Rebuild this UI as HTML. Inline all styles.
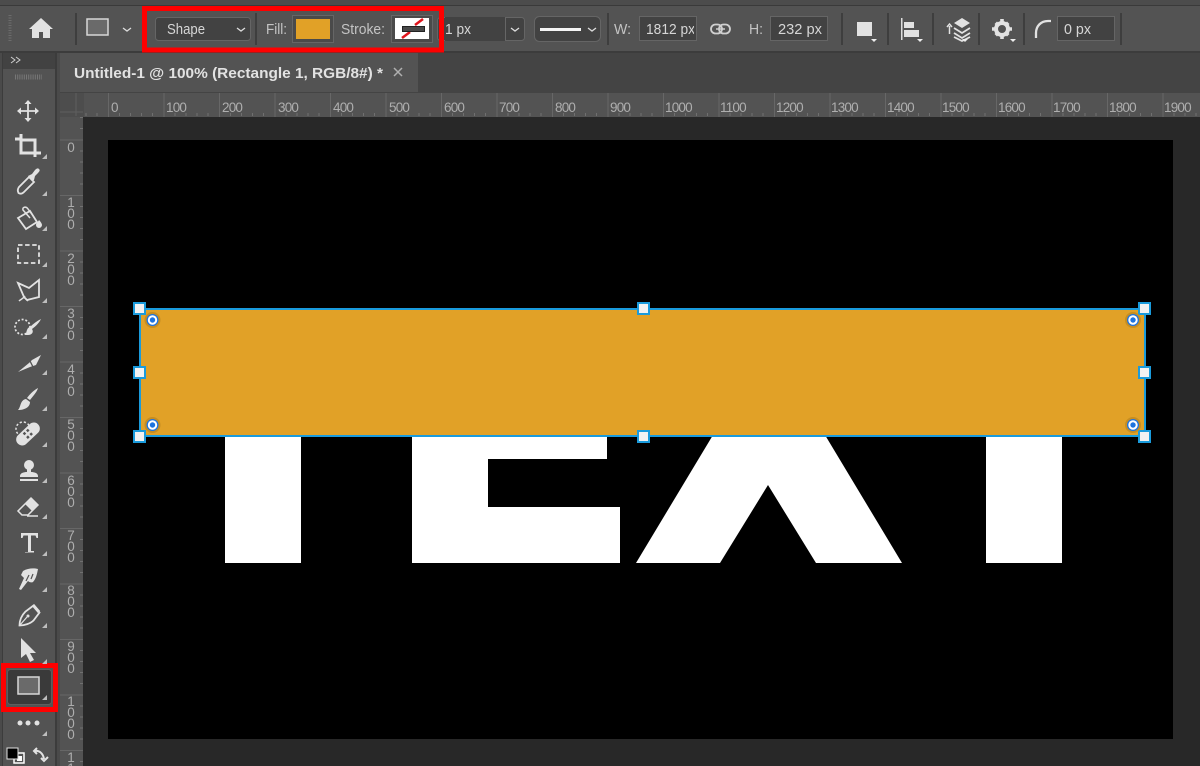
<!DOCTYPE html>
<html><head><meta charset="utf-8"><style>
html,body{margin:0;padding:0;background:#282828;width:1200px;height:766px;overflow:hidden}
svg{display:block}
text{font-family:"Liberation Sans",sans-serif}
.o{font-size:15px;fill:#d6d6d6}
.l{font-size:15px;fill:#c4c4c4}
.r{font-size:13.5px;fill:#aeaeae;letter-spacing:-.8px}
.v{font-size:13.5px;fill:#aeaeae;text-anchor:middle}
.s{fill:none;stroke:#e2e2e2;stroke-width:2}
.f{fill:#e2e2e2}
.d{fill:#424242;stroke:#656565;stroke-width:1}
.n{stroke:#3e3e3e;stroke-width:2}
</style></head><body>
<svg width="1200" height="766" viewBox="0 0 1200 766" xmlns="http://www.w3.org/2000/svg">
<defs>
<pattern id="hm" x="108" y="0" width="55.5" height="766" patternUnits="userSpaceOnUse"><rect width="1" height="766" fill="#676767"/><rect x="11" y="113" width="1" height="3" fill="#707070"/><rect x="22" y="113" width="1" height="3" fill="#707070"/><rect x="33" y="113" width="1" height="3" fill="#707070"/><rect x="44" y="113" width="1" height="3" fill="#707070"/></pattern>
<pattern id="vm" x="0" y="139.5" width="766" height="55.5" patternUnits="userSpaceOnUse"><rect width="766" height="1" fill="#676767"/><rect x="80" y="11" width="3" height="1" fill="#707070"/><rect x="80" y="22" width="3" height="1" fill="#707070"/><rect x="80" y="33" width="3" height="1" fill="#707070"/><rect x="80" y="44" width="3" height="1" fill="#707070"/></pattern>
</defs>

<!-- base -->
<rect width="1200" height="766" fill="#282828"/>
<rect width="1200" height="5" fill="#4c4c4c"/>
<rect y="5" width="1200" height="1" fill="#3a3a3a"/>
<rect y="6" width="1200" height="46" fill="#535353"/>
<rect y="51" width="1200" height="2" fill="#3c3c3c"/>
<rect y="53" width="1200" height="40" fill="#444"/>

<!-- left panel -->
<rect y="53" width="60" height="713" fill="#4a4a4a"/>
<rect x="2" y="53" width="1" height="713" fill="#3c3c3c"/>
<rect x="3" y="53" width="53" height="16" fill="#424242"/>
<rect x="3" y="69" width="53" height="697" fill="#535353"/>
<rect x="55" y="53" width="2" height="713" fill="#3c3c3c"/>
<path d="M11 57l4 3-4 3M16 57l4 3-4 3" fill="none" stroke="#cfcfcf" stroke-width="1"/>
<path d="M15 77h27" stroke="#777" stroke-width="5" stroke-dasharray="1 1.2"/>

<!-- tab -->
<rect x="60" y="53" width="358" height="39" fill="#535353"/>
<text x="74" y="78" font-size="15" font-weight="700" fill="#e2e2e2" textLength="309" lengthAdjust="spacingAndGlyphs">Untitled-1 @ 100% (Rectangle 1, RGB/8#) *</text>
<path d="M394 68l8 8M402 68l-8 8" stroke="#b0b0b0" stroke-width="1.500"/>

<!-- rulers -->
<rect x="60" y="93" width="1140" height="24" fill="#535353"/>
<rect x="60" y="93" width="24" height="673" fill="#535353"/>
<rect x="60" y="93" width="24" height="24" fill="#4d4d4d"/>
<rect x="84" y="93" width="1116" height="24" fill="url(#hm)"/>
<rect x="60" y="117" width="24" height="649" fill="url(#vm)"/>
<path d="M60 112h23M76 93v23" stroke="#5e5e5e" stroke-width="1"/>
<rect x="83" y="117" width="1117" height="649" fill="#282828"/>
<g class="r">
<text x="111" y="112">0</text><text x="166" y="112">100</text><text x="222" y="112">200</text><text x="278" y="112">300</text><text x="333" y="112">400</text><text x="389" y="112">500</text><text x="444" y="112">600</text><text x="499" y="112">700</text><text x="555" y="112">800</text><text x="610" y="112">900</text><text x="665" y="112">1000</text><text x="720" y="112">1100</text><text x="776" y="112">1200</text><text x="831" y="112">1300</text><text x="887" y="112">1400</text><text x="942" y="112">1500</text><text x="998" y="112">1600</text><text x="1053" y="112">1700</text><text x="1109" y="112">1800</text><text x="1164" y="112">1900</text>
</g>
<g class="v" transform="translate(0 1)">
<text x="71" y="151">0</text>
<text x="71" y="206">1</text><text x="71" y="217">0</text><text x="71" y="228">0</text>
<text x="71" y="262">2</text><text x="71" y="273">0</text><text x="71" y="284">0</text>
<text x="71" y="317">3</text><text x="71" y="328">0</text><text x="71" y="339">0</text>
<text x="71" y="373">4</text><text x="71" y="384">0</text><text x="71" y="395">0</text>
<text x="71" y="428">5</text><text x="71" y="439">0</text><text x="71" y="450">0</text>
<text x="71" y="484">6</text><text x="71" y="495">0</text><text x="71" y="506">0</text>
<text x="71" y="539">7</text><text x="71" y="550">0</text><text x="71" y="561">0</text>
<text x="71" y="594">8</text><text x="71" y="605">0</text><text x="71" y="616">0</text>
<text x="71" y="650">9</text><text x="71" y="661">0</text><text x="71" y="672">0</text>
<text x="71" y="705">1</text><text x="71" y="716">0</text><text x="71" y="727">0</text><text x="71" y="738">0</text>
<text x="71" y="761">1</text><text x="71" y="772">1</text>
</g>

<!-- document -->
<rect x="108" y="140" width="1065" height="599" fill="#000"/>
<g fill="#fff">
<rect x="225" y="430" width="76" height="133"/>
<path d="M412 430H607V459H488V507H620V563H412Z"/>
<path d="M716 430H822L902 563H816L768 485L720 563H636Z"/>
<rect x="986" y="430" width="76" height="133"/>
</g>
<rect x="140" y="309" width="1005" height="127" fill="#e1a127" stroke="#1a9bdc" stroke-width="2"/>
<g fill="#f2f2f2" stroke="#1a9bdc" stroke-width="2">
<rect x="134" y="303" width="11" height="11"/><rect x="638" y="303" width="11" height="11"/><rect x="1139" y="303" width="11" height="11"/>
<rect x="134" y="367" width="11" height="11"/><rect x="1139" y="367" width="11" height="11"/>
<rect x="134" y="431" width="11" height="11"/><rect x="638" y="431" width="11" height="11"/><rect x="1139" y="431" width="11" height="11"/>
</g>
<g>
<g fill="#c58d22"><circle cx="152.500" cy="320" r="8"/><circle cx="1133" cy="320" r="8"/><circle cx="152.500" cy="425" r="8"/><circle cx="1133" cy="425" r="8"/></g>
<g fill="#1d74e0"><circle cx="152.500" cy="320" r="6"/><circle cx="1133" cy="320" r="6"/><circle cx="152.500" cy="425" r="6"/><circle cx="1133" cy="425" r="6"/></g>
<g fill="#fff"><circle cx="152.500" cy="320" r="4.700"/><circle cx="1133" cy="320" r="4.700"/><circle cx="152.500" cy="425" r="4.700"/><circle cx="1133" cy="425" r="4.700"/></g>
<g fill="#1d74e0"><circle cx="152.500" cy="320" r="2.700"/><circle cx="1133" cy="320" r="2.700"/><circle cx="152.500" cy="425" r="2.700"/><circle cx="1133" cy="425" r="2.700"/></g>
</g>

<!-- options bar -->
<path d="M10 15v27" stroke="#6c6c6c" stroke-width="3" stroke-dasharray="1 1.500"/>
<path class="f" d="M41 18L29 29h3v9h7v-6h4v6h7v-9h3z"/>
<path class="n" d="M76 13v32"/>
<rect x="87" y="19" width="21" height="16" fill="#6a6a6a" stroke="#d8d8d8" stroke-width="1.500"/>
<path d="M123 28l4 3 4-3" fill="none" stroke="#ddd" stroke-width="1.300"/>

<rect x="155.500" y="17.500" width="95" height="23" rx="3" class="d"/>
<text x="167" y="34" class="o" textLength="38" lengthAdjust="spacingAndGlyphs">Shape</text>
<path d="M237 28l4 3 4-3" fill="none" stroke="#ddd" stroke-width="1.300"/>
<path class="n" d="M256 13v32"/>
<text x="266" y="34" class="l" textLength="21" lengthAdjust="spacingAndGlyphs">Fill:</text>
<rect x="292.500" y="15.500" width="41" height="27" fill="#4a4a4a" stroke="#666"/>
<rect x="296" y="19" width="34" height="20" fill="#e1a127"/>
<text x="341" y="34" class="l" textLength="44" lengthAdjust="spacingAndGlyphs">Stroke:</text>
<rect x="391.500" y="15.500" width="41" height="27" fill="#4a4a4a" stroke="#666"/>
<rect x="395" y="18" width="34" height="21" fill="#fff"/>
<path d="M402 38l8-6M415 25l8-6" stroke="#e0141c" stroke-width="2.500"/>
<rect x="402.500" y="26.500" width="22" height="5" fill="#484848" stroke="#222" stroke-width="1"/>

<rect x="437.500" y="17.500" width="87" height="23" rx="3" class="d"/>
<rect x="445" y="17" width="60" height="24" fill="#424242"/>
<rect x="505" y="18" width="1" height="22" fill="#666"/>
<text x="445" y="34" class="o" textLength="26" lengthAdjust="spacingAndGlyphs">1 px</text>
<path d="M511 28l4 3 4-3" fill="none" stroke="#ddd" stroke-width="1.300"/>

<!-- red highlight -->
<rect x="144.500" y="8.500" width="297" height="41.500" fill="none" stroke="#fe0000" stroke-width="5"/>

<rect x="534.500" y="16.500" width="66" height="25" rx="5" class="d"/>
<rect x="540" y="28" width="41" height="3" fill="#f4f4f4"/>
<path d="M588 28l4 3 4-3" fill="none" stroke="#ddd" stroke-width="1.300"/>
<path class="n" d="M608 13v32"/>

<text x="614" y="34" class="l" textLength="17" lengthAdjust="spacingAndGlyphs">W:</text>
<rect x="639.500" y="16.500" width="57" height="24" class="d"/>
<text x="646" y="34" class="o" textLength="49" lengthAdjust="spacingAndGlyphs">1812 px</text>
<rect x="694" y="18" width="2" height="21" fill="#424242"/>
<g fill="none" stroke="#d0d0d0" stroke-width="1.800"><rect x="711" y="24.500" width="11" height="9" rx="4.500"/><rect x="719" y="24.500" width="11" height="9" rx="4.500"/></g>
<path d="M716 29h9" stroke="#d0d0d0" stroke-width="1.500"/>
<text x="749" y="34" class="l" textLength="14" lengthAdjust="spacingAndGlyphs">H:</text>
<rect x="770.500" y="16.500" width="57" height="24" class="d"/>
<text x="778" y="34" class="o" textLength="44" lengthAdjust="spacingAndGlyphs">232 px</text>
<path class="n" d="M842 13v32"/>

<rect x="857" y="22" width="15" height="14" fill="#e2e2e2"/>
<path d="M871 39h6l-3 3z" fill="#eee"/>
<path class="n" d="M888 13v32"/>

<rect x="901" y="18" width="1.500" height="22" fill="#ddd"/>
<rect x="904" y="22" width="10" height="6" fill="#e2e2e2"/>
<rect x="904" y="30" width="15" height="7" fill="#e2e2e2"/>
<path d="M917 39h6l-3 3z" fill="#eee"/>
<path class="n" d="M933 13v32"/>

<path d="M947 27l2.500-3 2.500 3M949.500 26v8" fill="none" stroke="#e2e2e2" stroke-width="1.500"/>
<path d="M960 18l8 5-8 5-8-5z" class="f" transform="translate(2 0)"/>
<path d="M954 28l8 5 8-5M954 33l8 5 8-5M954 37l8 4 8-4" fill="none" stroke="#e2e2e2" stroke-width="1.800"/>
<path d="M962 39h6l-3 3z" fill="#eee"/>
<path class="n" d="M979 13v32"/>

<g transform="translate(1002 29)"><circle r="6" fill="none" stroke="#e2e2e2" stroke-width="4"/><path d="M-1.800-10h3.600v4h-3.600zM-1.800 6h3.600v4h-3.600zM-10-1.800h4v3.600h-4zM6-1.800h4v3.600h-4zM-7.500-5l2.500-2.500 2.500 2.500-2.500 2.500zM5-7.500l2.500 2.500-2.500 2.500-2.500-2.500zM-5 7.500l-2.500-2.500 2.500-2.500 2.500 2.500zM5 7.500l-2.500-2.500 2.500-2.500 2.500 2.500z" class="f"/></g>
<path d="M1010 39h6l-3 3z" fill="#eee"/>
<path class="n" d="M1024 13v32"/>

<path d="M1036 38v-5c0-7 5-12 12-12h3" fill="none" stroke="#e2e2e2" stroke-width="2.300"/>
<rect x="1057.500" y="16.500" width="57" height="24" class="d"/>
<text x="1064" y="34" class="o" textLength="27" lengthAdjust="spacingAndGlyphs">0 px</text>
<path class="n" d="M1121 13v32"/>

<!-- tools -->
<g>
<!-- move -->
<path d="M28 102v18M19 111h18" stroke="#e2e2e2" stroke-width="1.800"/>
<path class="f" d="M28 100l3.500 4h-7zM28 122l3.500-4h-7zM17 111l4-3.500v7zM39 111l-4-3.500v7z"/>
<!-- crop -->
<path d="M15 139h5M21 134v19h20" fill="none" stroke="#e2e2e2" stroke-width="3"/>
<path d="M21 140h14v17" fill="none" stroke="#e2e2e2" stroke-width="3"/>
<!-- eyedropper -->
<path d="M19 187L29 177 34 182 24 192C22 194 20 194 18.500 193 17.500 191 17.500 189 19 187Z" fill="none" stroke="#e2e2e2" stroke-width="1.800"/>
<path class="f" d="M28 176l4-2 3-4c2-2 3-2 4-1s1 2-1 4l-3 3-1 4-2 1z"/>
<!-- bucket -->
<path d="M30 211L37 222 26 229 18 218Z" fill="none" stroke="#e2e2e2" stroke-width="1.800"/>
<path d="M30 218L23 210c-1-3 3-4 5-1l3 4" fill="none" stroke="#e2e2e2" stroke-width="1.500"/>
<path class="f" d="M39 220c2 2 3 4 3 5a3 3 0 0 1-6 0c0-2 2-3 3-5z"/>
<!-- marquee -->
<rect x="18" y="245" width="21" height="18" fill="none" stroke="#e2e2e2" stroke-width="1.800" stroke-dasharray="4.500 2.600"/>
<!-- lasso -->
<path d="M18 283l11 5 10-8v17l-12 3-3-3-6-14z" fill="none" stroke="#e2e2e2" stroke-width="1.800"/>
<path d="M25 296c-2 3-4 3-6 5M24 297l4 4" fill="none" stroke="#e2e2e2" stroke-width="1.500"/>
<!-- quick select -->
<circle cx="22.500" cy="327" r="7.500" fill="none" stroke="#e2e2e2" stroke-width="1.700" stroke-dasharray="2 1.800"/>
<path class="f" d="M41 319c-2 4-5 7-9 10 2 3 0 6-4 6h-3c2-2 1-7 5-8 3-3 7-6 11-8z"/>
<!-- smudge/edge -->
<path class="f" d="M18 372l11-9 3-3 9-5-5 10-6 2z"/>
<path d="M30 361l3 6" stroke="#535353" stroke-width="1.300"/>
<!-- brush -->
<path class="f" d="M38 388c-1 4-5 8-8 12l-3-2c3-4 7-8 11-10zM26 399l4 3c0 5-5 8-12 8 3-3 2-10 8-11z"/>
<!-- healing -->
<circle cx="23" cy="429" r="7" fill="none" stroke="#e2e2e2" stroke-width="1.500" stroke-dasharray="2.200 2"/>
<g transform="rotate(-43 28 434)"><rect x="14" y="428" width="28" height="12" rx="6" fill="#e2e2e2"/><g fill="#535353"><rect x="24.500" y="430" width="2.500" height="2.500"/><rect x="29" y="430" width="2.500" height="2.500"/><rect x="24.500" y="435" width="2.500" height="2.500"/><rect x="29" y="435" width="2.500" height="2.500"/></g></g>
<!-- stamp -->
<circle cx="29" cy="465" r="5" class="f"/>
<path class="f" d="M27 468h4v4c3 0 7 1 7 4v1H20v-1c0-3 4-4 7-4z"/>
<rect x="20" y="479" width="18" height="2" class="f"/>
<!-- eraser -->
<path d="M31 498l7 7-10 10H22l-4-4z" fill="none" stroke="#e2e2e2" stroke-width="1.500"/>
<path class="f" d="M31 498l7 7-6 6-7-7z"/>
<path d="M27 516h11" stroke="#e2e2e2" stroke-width="1.500"/>
<!-- type -->
<path class="f" d="M21 533h17v5h-1.500l-1-2.500h-4.500v15.500h3v1.500H25V552h3V535.500h-4.500l-1 2.500H21z"/>
<!-- smudge finger -->
<path class="f" d="M23 571c5-3 11-3 15-2-1 5-2 10-5 13-2 1-4 0-5-1l-7 9-2-1 5-11-3-3z"/>
<path d="M29 575l-3 6M33 574l-2 5" stroke="#535353" stroke-width="1.200"/>
<!-- pen -->
<path d="M19.500 625.500c0-6 3-11 6-14l8-6 6 7-6 8c-3 3-9 5-14 5z" fill="none" stroke="#e2e2e2" stroke-width="1.800"/>
<path d="M33 605l6 7" stroke="#e2e2e2" stroke-width="3"/>
<path d="M20 625l7-8" stroke="#e2e2e2" stroke-width="1.200"/>
<circle cx="28" cy="616" r="1.500" class="f"/>
<!-- arrow -->
<path class="f" d="M21 638v20l5-4 4 8 4-2-4-7h6z"/>
</g>
<!-- selected tool -->
<rect x="7.500" y="669.500" width="44" height="35" rx="3" fill="#3a3a3a" stroke="#5e5e5e"/>
<rect x="18" y="677" width="21" height="17" fill="#6a6a6a" stroke="#d8d8d8" stroke-width="1.500"/>
<rect x="3.500" y="665.500" width="52" height="44" fill="none" stroke="#fe0000" stroke-width="5"/>
<!-- dots -->
<g class="f"><circle cx="20" cy="723" r="2.500"/><circle cx="28" cy="723" r="2.500"/><circle cx="37" cy="723" r="2.500"/></g>
<!-- fg/bg -->
<rect x="14" y="753" width="10" height="10" fill="#535353" stroke="#fff" stroke-width="1.500"/>
<rect x="17" y="756" width="5" height="5" fill="#fff"/>
<rect x="7" y="748" width="11" height="11" fill="#000" stroke="#e2e2e2" stroke-width="1"/>
<path d="M37 748l-3 3 3 3M34 751c5-1 9 2 10 8M48 757l-4 4-3-3" fill="none" stroke="#e2e2e2" stroke-width="2"/>
<!-- corner triangles -->
<path fill="#bdbdbd" d="M47 154v5h-5zM47 191v5h-5zM47 226v5h-5zM47 262v5h-5zM47 298v5h-5zM47 334v5h-5zM47 370v5h-5zM47 406v5h-5zM47 442v5h-5zM47 478v5h-5zM47 514v5h-5zM47 551v5h-5zM47 587v5h-5zM47 623v5h-5zM47 659v5h-5zM47 695v5h-5zM47 731v5h-5z"/>
</svg>
</body></html>
